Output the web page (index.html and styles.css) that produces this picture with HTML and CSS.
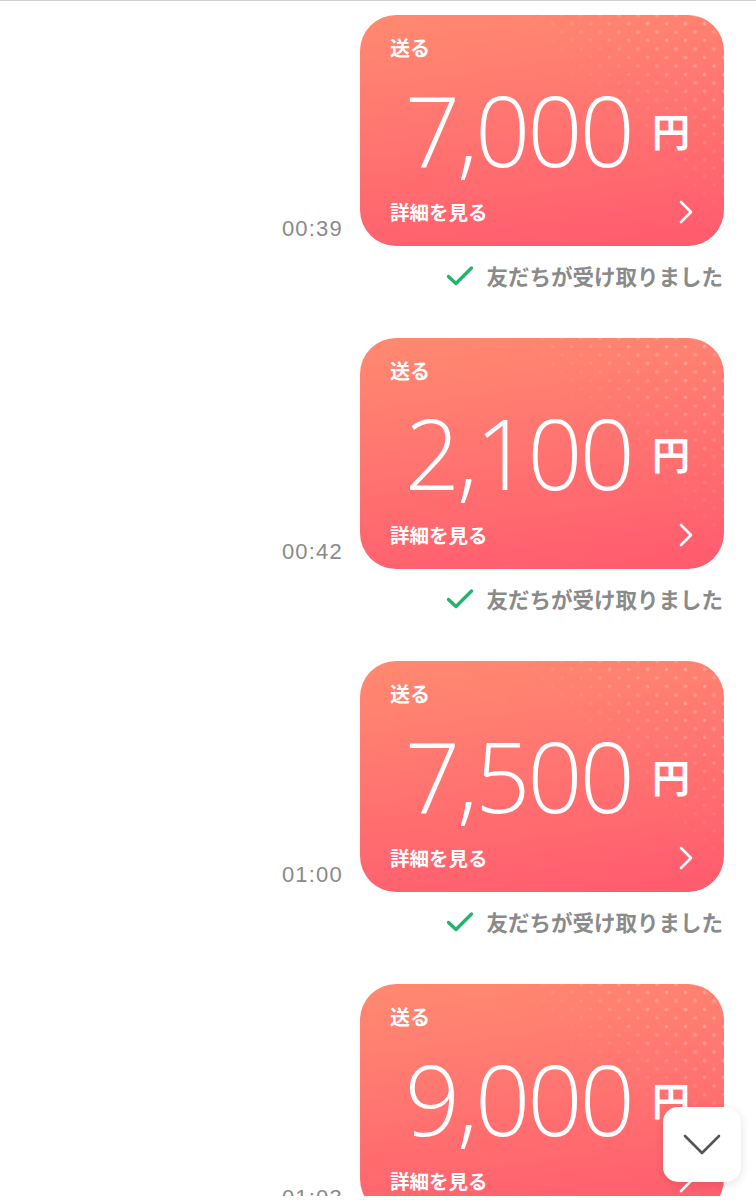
FILE: index.html
```html
<!DOCTYPE html>
<html lang="ja">
<head>
  <meta charset="UTF-8" />
  <meta name="viewport" content="width=device-width, initial-scale=1.0"/>
  <title>送金履歴</title>
  <link rel="stylesheet" href="styles.css">
</head>
<body>

  <div id="chat">

    <div class="msg">
      <div class="msg-row">
        <span class="time">00:39</span>
        <div class="card">
          <div class="card-label">送る</div>
          <div class="amount"><span class="num">7,000</span><span class="yen">円</span></div>
          <div class="card-foot">
            <span>詳細を見る</span>
            <svg class="chev" width="14" height="24" viewBox="0 0 14 24"><path d="M2 2 L12 12 L2 22" fill="none" stroke="#fff" stroke-width="2.6" stroke-linecap="round" stroke-linejoin="round"/></svg>
          </div>
        </div>
      </div>
      <div class="status">
        <svg width="28" height="22" viewBox="0 0 28 22"><path d="M2.5 11.5 L10 18.5 L25.5 3" fill="none" stroke="#23b36a" stroke-width="3.4" stroke-linecap="round" stroke-linejoin="round"/></svg>
        <span>友だちが受け取りました</span>
      </div>
    </div>

    <div class="msg">
      <div class="msg-row">
        <span class="time">00:42</span>
        <div class="card">
          <div class="card-label">送る</div>
          <div class="amount"><span class="num">2,100</span><span class="yen">円</span></div>
          <div class="card-foot">
            <span>詳細を見る</span>
            <svg class="chev" width="14" height="24" viewBox="0 0 14 24"><path d="M2 2 L12 12 L2 22" fill="none" stroke="#fff" stroke-width="2.6" stroke-linecap="round" stroke-linejoin="round"/></svg>
          </div>
        </div>
      </div>
      <div class="status">
        <svg width="28" height="22" viewBox="0 0 28 22"><path d="M2.5 11.5 L10 18.5 L25.5 3" fill="none" stroke="#23b36a" stroke-width="3.4" stroke-linecap="round" stroke-linejoin="round"/></svg>
        <span>友だちが受け取りました</span>
      </div>
    </div>

    <div class="msg">
      <div class="msg-row">
        <span class="time">01:00</span>
        <div class="card">
          <div class="card-label">送る</div>
          <div class="amount"><span class="num">7,500</span><span class="yen">円</span></div>
          <div class="card-foot">
            <span>詳細を見る</span>
            <svg class="chev" width="14" height="24" viewBox="0 0 14 24"><path d="M2 2 L12 12 L2 22" fill="none" stroke="#fff" stroke-width="2.6" stroke-linecap="round" stroke-linejoin="round"/></svg>
          </div>
        </div>
      </div>
      <div class="status">
        <svg width="28" height="22" viewBox="0 0 28 22"><path d="M2.5 11.5 L10 18.5 L25.5 3" fill="none" stroke="#23b36a" stroke-width="3.4" stroke-linecap="round" stroke-linejoin="round"/></svg>
        <span>友だちが受け取りました</span>
      </div>
    </div>

    <div class="msg">
      <div class="msg-row">
        <span class="time">01:03</span>
        <div class="card">
          <div class="card-label">送る</div>
          <div class="amount"><span class="num">9,000</span><span class="yen">円</span></div>
          <div class="card-foot">
            <span>詳細を見る</span>
            <svg class="chev" width="14" height="24" viewBox="0 0 14 24"><path d="M2 2 L12 12 L2 22" fill="none" stroke="#fff" stroke-width="2.6" stroke-linecap="round" stroke-linejoin="round"/></svg>
          </div>
        </div>
      </div>
    </div>

  </div>

  <button class="scroll-down" aria-label="下へ">
    <svg width="38" height="22" viewBox="0 0 38 22"><path d="M2 2 L19 19 L36 2" fill="none" stroke="#555" stroke-width="2.6" stroke-linecap="round" stroke-linejoin="round"/></svg>
  </button>

</body>
</html>
```

FILE: styles.css
```css
body {
  margin: 0;
  padding: 0;
  background-color: #fff;
  font-family: "Noto Sans CJK JP", "Noto Sans", sans-serif;
}

#chat {
  height: 1196px;
  overflow: hidden;
  border-top: 1px solid #cfcfcf;
  padding-top: 14px;
  box-sizing: border-box;
}

.msg {
  margin-bottom: 48px;
}

.msg-row {
  display: flex;
  justify-content: flex-end;
  align-items: flex-end;
  padding-right: 32px;
}

.time {
  font-family: "Liberation Sans", Arial, sans-serif;
  font-size: 22px;
  line-height: 24px;
  letter-spacing: 1.2px;
  color: #8a8a8a;
  margin-right: 17px;
  margin-bottom: 5px;
}

.card {
  position: relative;
  overflow: hidden;
  width: 364px;
  height: 231px;
  box-sizing: border-box;
  padding: 19px 31px 20px 30px;
  border-radius: 36px;
  background: linear-gradient(172deg, #ff8a70 0%, #ff7570 45%, #ff5a6e 100%);
  color: #fff;
  display: flex;
  flex-direction: column;
}

/* dotted pattern in the upper right corner */
.card::before {
  content: "";
  position: absolute;
  top: 0;
  right: 0;
  width: 200px;
  height: 210px;
  background:
    radial-gradient(circle, rgba(255,255,255,0.22) 1.7px, transparent 2.3px) 0 0 / 19px 17px,
    radial-gradient(circle, rgba(255,255,255,0.22) 1.7px, transparent 2.3px) 9.5px 8.5px / 19px 17px;
  -webkit-mask-image: linear-gradient(to bottom left, #000 20%, transparent 55%);
  mask-image: linear-gradient(to bottom left, #000 20%, transparent 55%);
}

.card-label {
  position: relative;
  font-size: 20px;
  font-weight: bold;
  line-height: 28px;
}

.amount {
  position: relative;
  flex: 1;
  display: flex;
  align-items: center;
  justify-content: flex-end;
  padding-right: 3px;
}

.num {
  font-family: "Open Sans", "Noto Sans", sans-serif;
  font-weight: 300;
  font-size: 97px;
  line-height: 1;
  letter-spacing: -3px;
  margin-right: 20px;
  margin-top: -2px;
}

.yen {
  font-size: 38px;
  font-weight: bold;
  line-height: 1;
}

.card-foot {
  position: relative;
  display: flex;
  justify-content: space-between;
  align-items: center;
  font-size: 19.5px;
  font-weight: bold;
  line-height: 28px;
}

.chev {
  display: block;
}

.status {
  display: flex;
  justify-content: flex-end;
  align-items: center;
  gap: 12px;
  padding-right: 33px;
  margin-top: 16px;
  font-size: 21.5px;
  font-weight: bold;
  line-height: 28px;
  color: #8a8a8a;
}

.status svg {
  display: block;
}

.scroll-down {
  position: fixed;
  right: 15px;
  bottom: 18px;
  width: 78px;
  height: 75px;
  border: none;
  border-radius: 15px;
  background-color: #fff;
  box-shadow: 0 2px 10px rgba(0,0,0,0.12);
  display: flex;
  align-items: center;
  justify-content: center;
  padding: 0;
  cursor: pointer;
}
```
